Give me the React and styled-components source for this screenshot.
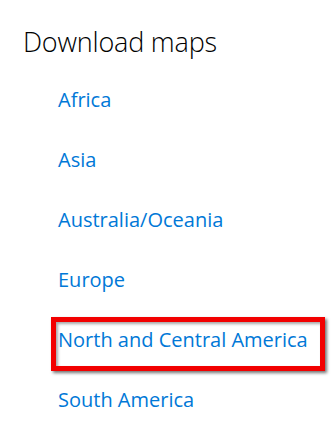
import React from 'react';
import styled, { createGlobalStyle } from 'styled-components';

const GlobalStyle = createGlobalStyle`
  html, body {
    margin: 0;
    padding: 0;
    background: #ffffff;
  }
  body {
    font-family: "Open Sans", "Noto Sans", "Liberation Sans", sans-serif;
  }
`;

const Page = styled.div`
  width: 333px;
  height: 435px;
  overflow: hidden;
  background: #fff;
  padding: 24px 0 0 23px;
  box-sizing: border-box;
`;

const Title = styled.h1`
  margin: 0;
  font-size: 27px;
  line-height: 36px;
  font-weight: 300;
  color: #000;
  letter-spacing: -0.2px;
`;

const List = styled.ul`
  list-style: none;
  margin: 17px 0 0 28px;
  padding: 0;
  display: flex;
  flex-direction: column;
`;

const Row = styled.li`
  height: 60px;
  display: flex;
  align-items: flex-start;
`;

const Link = styled.a`
  display: inline-block;
  box-sizing: border-box;
  height: 54px;
  padding: 4px ${(p) => (p.$marked ? '12px' : '0')} 12px 2px;
  border: 5px solid ${(p) => (p.$marked ? '#f20000' : 'transparent')};
  box-shadow: ${(p) =>
    p.$marked
      ? '2px 2px 3px rgba(0,0,0,0.55), inset 2px 2px 3px rgba(0,0,0,0.35)'
      : 'none'};
  font-size: 20px;
  line-height: 28px;
  color: #0078d7;
  text-decoration: none;
  white-space: nowrap;
`;

const regions = [
  'Africa',
  'Asia',
  'Australia/Oceania',
  'Europe',
  'North and Central America',
  'South America',
];

export default function App() {
  return (
    <>
      <GlobalStyle />
      <Page>
        <Title>Download maps</Title>
        <List>
          {regions.map((r) => (
            <Row key={r}>
              <Link href="#" $marked={r === 'North and Central America'}>
                {r}
              </Link>
            </Row>
          ))}
        </List>
      </Page>
    </>
  );
}
